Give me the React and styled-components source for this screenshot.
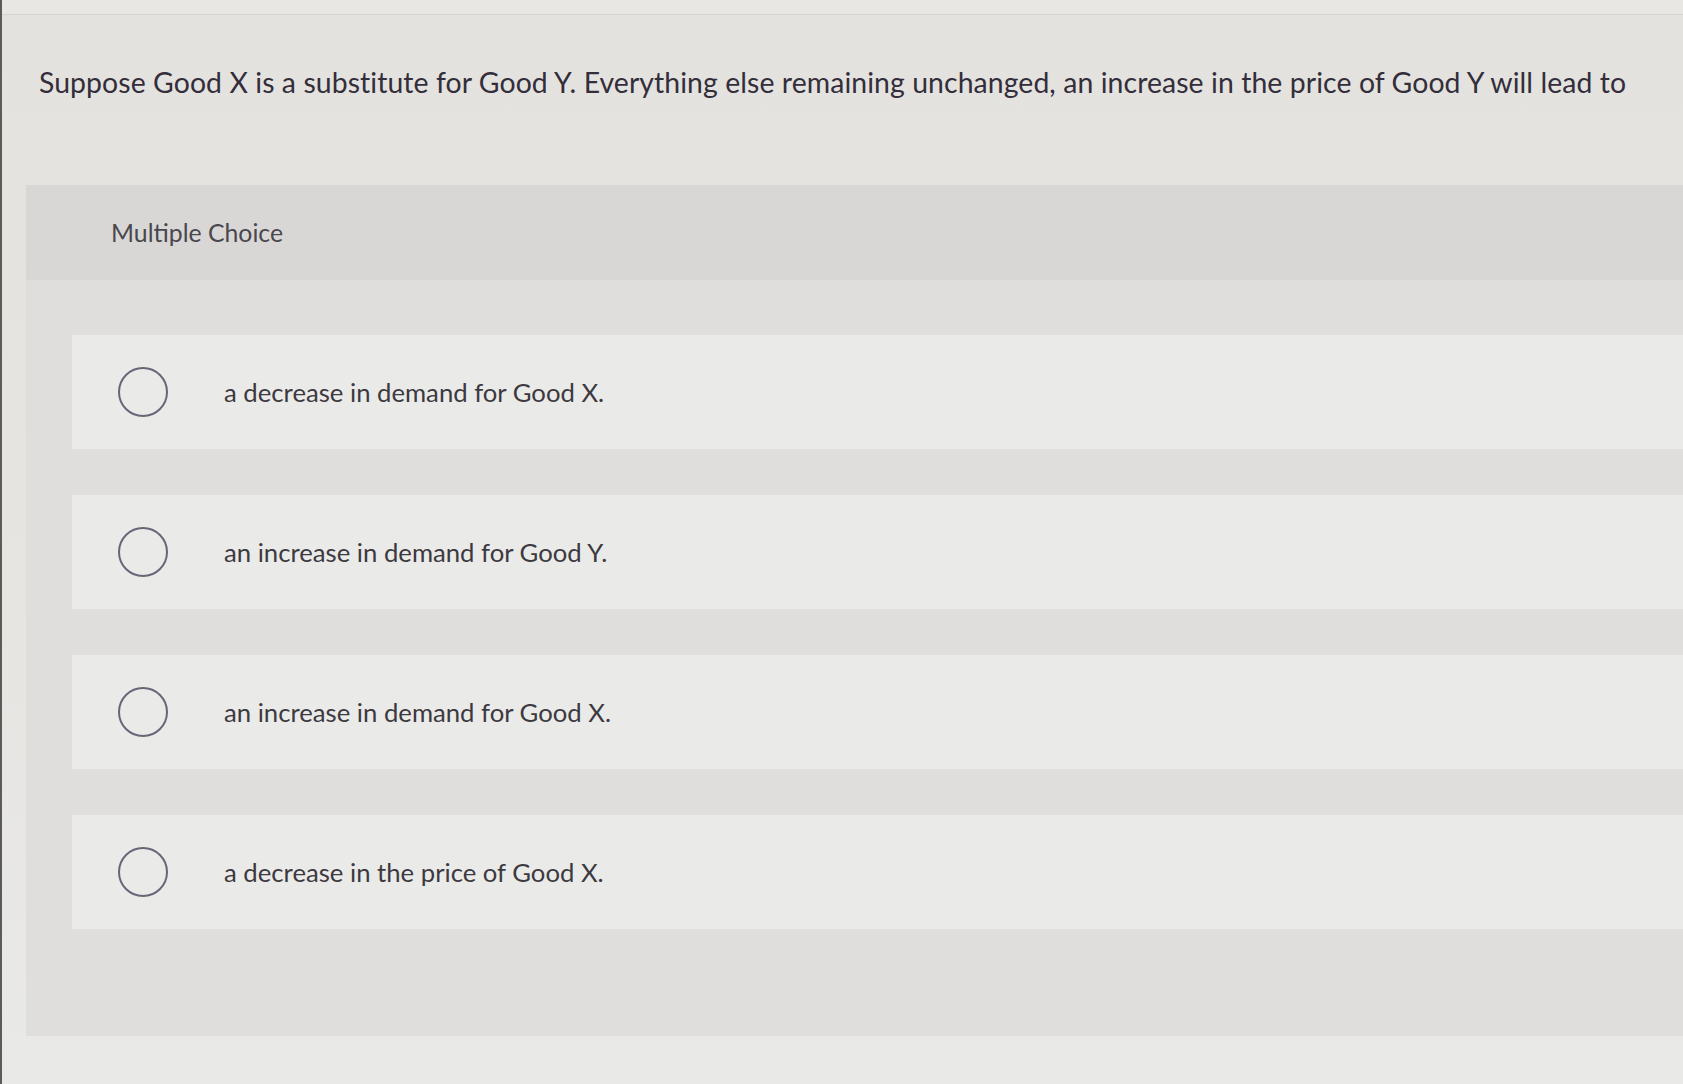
import React from 'react'
import styled, { createGlobalStyle } from 'styled-components'

const GlobalStyle = createGlobalStyle`
  html, body {
    margin: 0;
    padding: 0;
    background: #e6e5e2;
  }
  body {
    font-family: Lato, "Liberation Sans", sans-serif;
  }
`

const options = [
  'a decrease in demand for Good X.',
  'an increase in demand for Good Y.',
  'an increase in demand for Good X.',
  'a decrease in the price of Good X.',
]

const App = () => {
  return (
    <>
      <GlobalStyle />
      <Page>
        <TopEdge />
        <Question>
          Suppose Good X is a substitute for Good Y. Everything else remaining unchanged, an increase
          in the price of Good Y will lead to
        </Question>
        <Panel>
          <PanelHeader>Multiple Choice</PanelHeader>
          <Choices>
            {options.map((text) => (
              <Choice key={text}>
                <Radio />
                <ChoiceText>{text}</ChoiceText>
              </Choice>
            ))}
          </Choices>
        </Panel>
      </Page>
    </>
  )
}

const Page = styled.div`
  min-height: 100vh;
  box-sizing: border-box;
  border-left: 2px solid #5b5a5c;
  background: linear-gradient(180deg, #e3e2df 0%, #e6e5e2 60%, #e9e9e7 100%);
  overflow: hidden;
`

const TopEdge = styled.div`
  height: 14px;
  border-bottom: 1px solid #d4d3d0;
  background: #e8e7e4;
`

const Question = styled.p`
  margin: 49px 0 0 37px;
  font-size: 28.4px;
  line-height: 36px;
  letter-spacing: 0.08px;
  color: #332e3a;
  white-space: nowrap;
`

const Panel = styled.section`
  margin: 85px 0 0 24px;
  background: #dfdedc;
  padding-bottom: 107px;
`

const PanelHeader = styled.div`
  height: 95px;
  display: flex;
  align-items: center;
  padding-left: 85px;
  background: #d8d7d5;
  font-size: 24.8px;
  color: #4a474e;
`

const Choices = styled.div`
  display: flex;
  flex-direction: column;
  gap: 46px;
  padding: 55px 0 0 46px;
`

const Choice = styled.div`
  height: 114px;
  display: flex;
  align-items: center;
  padding-left: 46px;
  background: #eaeae8;
`

const Radio = styled.span`
  flex: none;
  width: 50px;
  height: 50px;
  border-radius: 50%;
  border: 2px solid #676678;
  box-sizing: border-box;
`

const ChoiceText = styled.span`
  margin-left: 56px;
  font-size: 25.7px;
  color: #3c3940;
`

export default App
